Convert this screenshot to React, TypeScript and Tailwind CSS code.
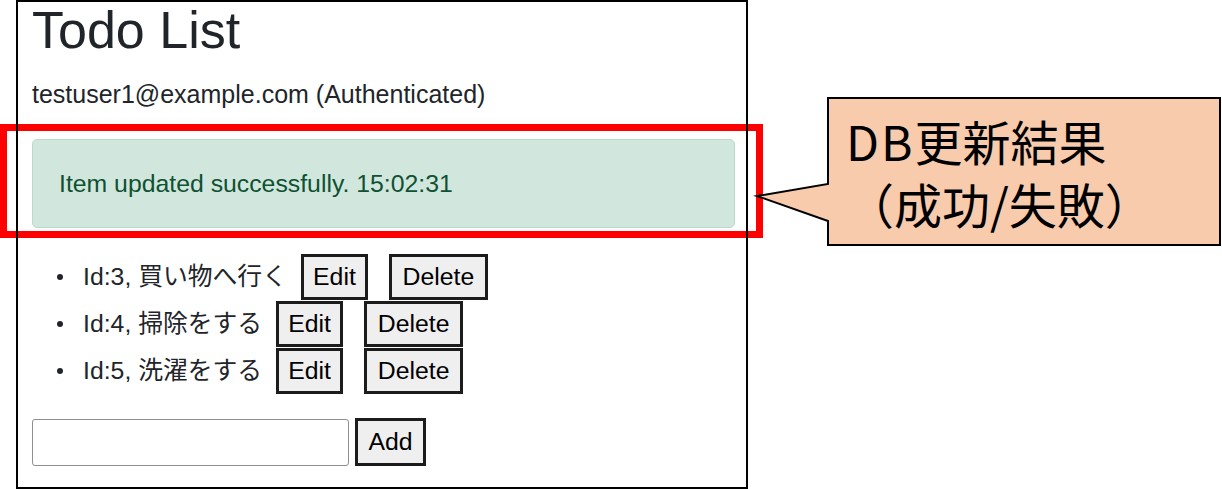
const todos = [
  { id: 3, title: "買い物へ行く" },
  { id: 4, title: "掃除をする" },
  { id: 5, title: "洗濯をする" },
];

interface IButton {
  label: string;
  className?: string;
}

function RawButton({ label, className = "" }: IButton) {
  return (
    <button
      type="button"
      className={`flex h-[46px] items-center justify-center border-[3px] border-[#1c1c1c] bg-[#efefef] leading-[28px] text-black ${className}`}
    >
      {label}
    </button>
  );
}

function Callout() {
  return (
    <>
      <svg
        className="absolute left-[750px] top-[94px] h-[155px] w-[472px]"
        viewBox="0 0 472 155"
      >
        <path
          d="M78 4 H470 V151 H78 V127 L7 102 L78 90 Z"
          fill="#f8cbad"
          stroke="#000"
          strokeWidth="2"
          strokeLinejoin="miter"
        />
      </svg>
      <div className="absolute left-[846px] top-[109px] whitespace-nowrap font-['Noto_Sans_CJK_JP',sans-serif] text-[48px] leading-[63px] text-black">
        <div>
          <span className="tracking-[2px]">DB</span>更新結果
        </div>
        <div>（成功/失敗）</div>
      </div>
    </>
  );
}

export default function App() {
  return (
    <div className="relative h-[489px] w-[1222px] overflow-hidden bg-white font-['Liberation_Sans','Noto_Sans_CJK_JP',sans-serif] text-[24.8px] text-[#212529]">
      {/* highlight frame sits under the page border */}
      <div className="absolute left-0 top-[124px] h-[114px] w-[763px] border-[7px] border-[#ff0000]" />

      <div className="relative z-10 ml-[16px] box-border h-[489px] w-[732px] border-2 border-black pl-[14px]">
        <h1 className="text-[52px] leading-[56px]">Todo List</h1>
        <p className="mt-[22px] text-[25px] leading-[28px]">
          testuser1@example.com (Authenticated)
        </p>

        <div className="mt-[31px] h-[89px] w-[703px] rounded-[5px] border border-[#badbcc] bg-[#d1e7dd] pl-[26px] pt-[30px] leading-[28px] text-[#0f5132]">
          Item updated successfully. 15:02:31
        </div>

        <ul className="mt-[26px] flex flex-col gap-px">
          {todos.map((todo) => (
            <li key={todo.id} className="flex items-baseline">
              <span className="ml-[25px] mr-[20px] size-[6px] self-center rounded-full bg-[#212529]" />
              <span className="leading-[28px]">
                Id:{todo.id}, {todo.title}
              </span>
              <RawButton label="Edit" className="ml-[14px] w-[67px]" />
              <RawButton label="Delete" className="ml-[21px] w-[99px]" />
            </li>
          ))}
        </ul>

        <div className="mt-[24px] flex items-center gap-[6px]">
          <input
            type="text"
            className="h-[47px] w-[317px] rounded-[3px] border-[1.5px] border-[#8f8f8f] bg-white px-2 outline-none"
          />
          <button
            type="button"
            className="flex h-[48px] w-[71px] items-center justify-center border-[3px] border-[#1c1c1c] bg-[#efefef] leading-[28px] text-black"
          >
            Add
          </button>
        </div>
      </div>

      <Callout />
    </div>
  );
}
